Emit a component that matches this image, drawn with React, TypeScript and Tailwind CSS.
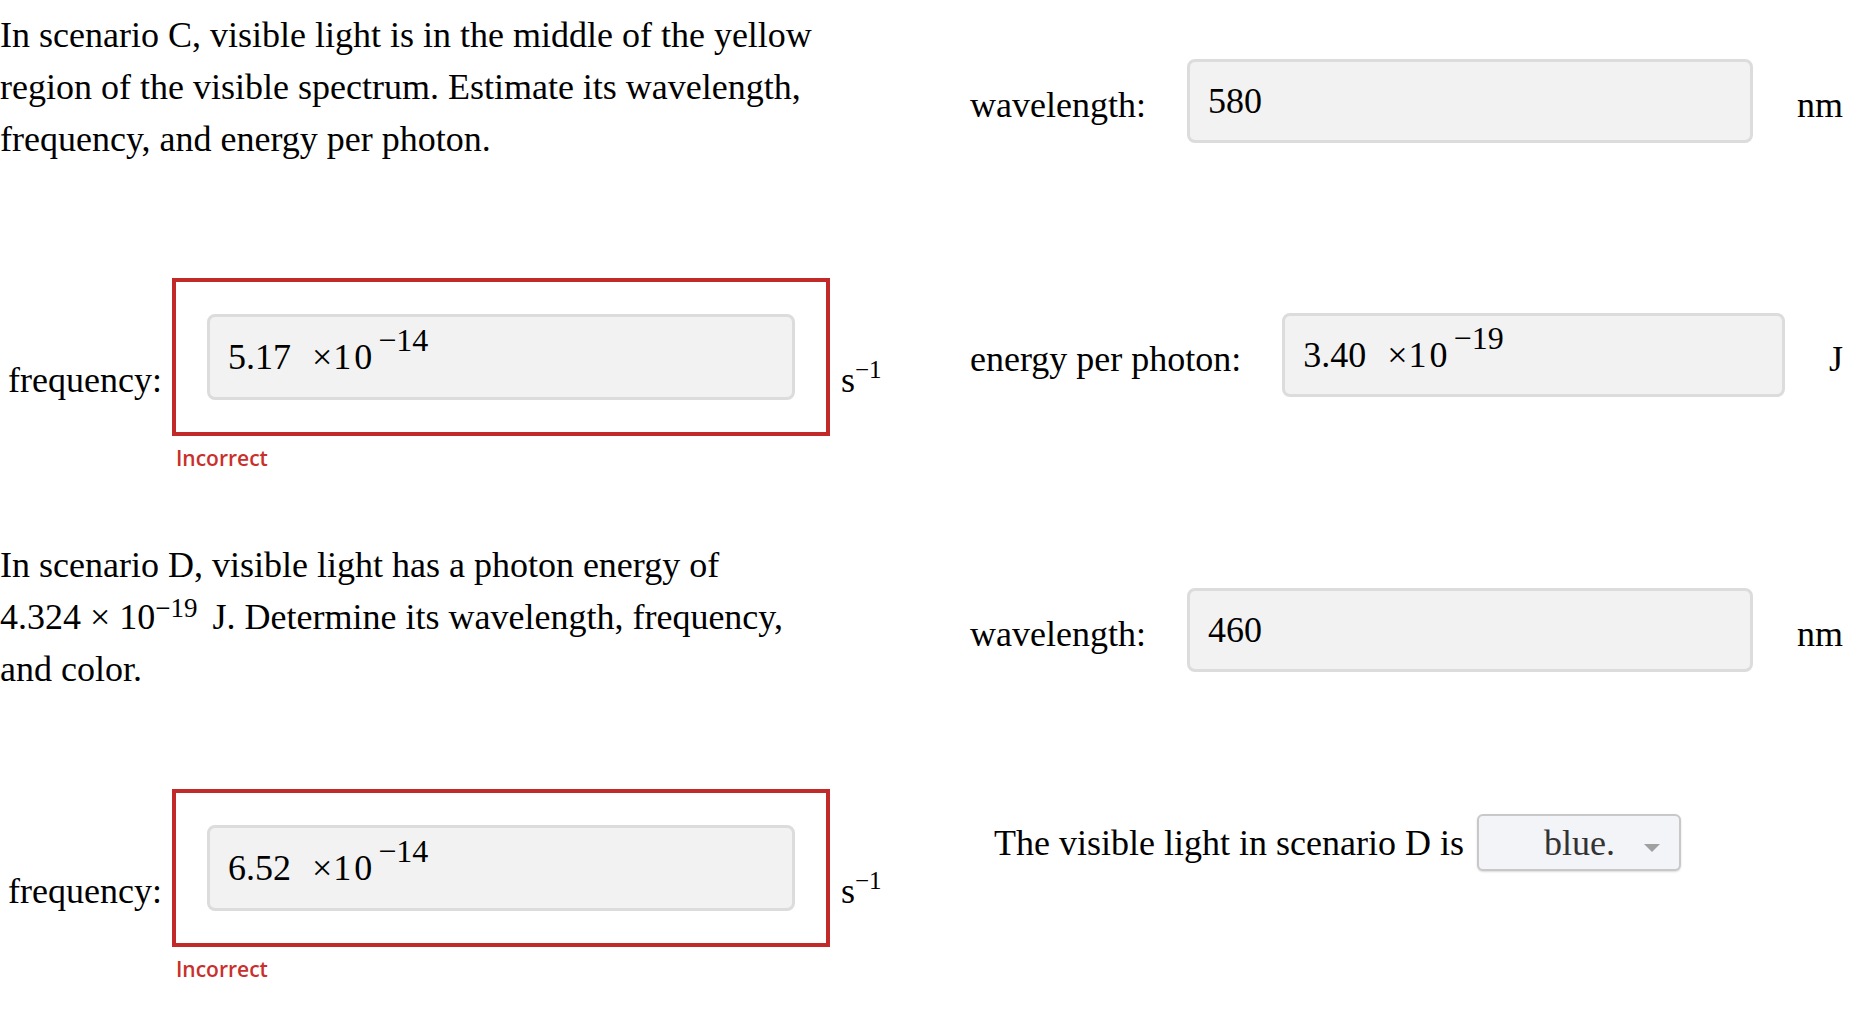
import React from 'react'

const INPUT = 'flex items-center rounded-[8px] border-[3px] border-[#dcdcdc] bg-[#f2f2f2] pl-[18px] text-black'

function Sci({ base, exp }: { base: string; exp: string }) {
  return (
    <span className="whitespace-nowrap">
      {base}
      <span className="ml-[21px]">×</span>
      <span className="ml-[1px] tracking-[3px]">10</span>
      <sup className="ml-[3px] text-[32px] top-[-18px]">−{exp}</sup>
    </span>
  )
}

function FrequencyField({ base, exp, className = '' }: { base: string; exp: string; className?: string }) {
  return (
    <div className={`flex items-start ${className}`}>
      <span className="pl-[8px] mt-[76px] whitespace-nowrap">frequency:</span>
      <div className="ml-[10px] flex flex-col">
        <div className="w-[658px] border-4 border-[#c22a2a] px-[31px] py-[32px]">
          <div className={`${INPUT} h-[86px]`}>
            <Sci base={base} exp={exp} />
          </div>
        </div>
        <span className="mt-[8px] pl-[4px] font-['Open_Sans',sans-serif] text-[21px] leading-[28px] font-semibold text-[#c9302c]">
          Incorrect
        </span>
      </div>
      <span className="ml-[11px] mt-[76px] whitespace-nowrap">
        s<sup className="text-[25px] top-[-14px]">−1</sup>
      </span>
    </div>
  )
}

function UnitField({ label, unit, children, className = '' }: { label: string; unit: string; children: React.ReactNode; className?: string }) {
  return (
    <div className={`flex items-start ${className}`}>
      <span className="mt-[20px] whitespace-nowrap">{label}</span>
      <div className={`${INPUT} ml-[41px] h-[84px] flex-1`}>{children}</div>
      <span className="ml-[44px] mt-[20px]">{unit}</span>
    </div>
  )
}

export default function App() {
  return (
    <div className="min-h-screen w-[1866px] bg-white font-['Liberation_Serif','Times_New_Roman',serif] text-[36px] leading-[52px] text-black">
      {/* Scenario C */}
      <div className="grid grid-cols-[860px_1fr] gap-x-[110px] pr-[23px]">
        <div className="flex flex-col">
          <p className="mt-[9px] w-[830px]">
            In scenario C, visible light is in the middle of the yellow region of the visible spectrum. Estimate its wavelength, frequency, and energy per photon.
          </p>
          <FrequencyField base="5.17" exp="14" className="mt-[113px]" />
        </div>
        <div className="flex flex-col">
          <UnitField label="wavelength:" unit="nm" className="mt-[59px]">580</UnitField>
          <UnitField label="energy per photon:" unit="J" className="mt-[170px]">
            <Sci base="3.40" exp="19" />
          </UnitField>
        </div>
      </div>

      {/* Scenario D */}
      <div className="mt-[67px] grid grid-cols-[860px_1fr] gap-x-[110px] pr-[23px]">
        <div className="flex flex-col">
          <p className="w-[830px]">
            In scenario D, visible light has a photon energy of{' '}
            <span className="whitespace-nowrap">
              4.324 × 10<sup className="mr-[6px] text-[27px] top-[-12px]">−19</sup>
            </span>{' '}
            J. Determine its wavelength, frequency, and color.
          </p>
          <FrequencyField base="6.52" exp="14" className="mt-[94px]" />
        </div>
        <div className="flex flex-col">
          <UnitField label="wavelength:" unit="nm" className="mt-[49px]">460</UnitField>
          <div className="mt-[142px] ml-[24px] flex items-center">
            <span className="whitespace-nowrap">The visible light in scenario D is</span>
            <div className="ml-[13px] flex h-[57px] w-[204px] items-center rounded-[6px] border-2 border-[#c8c8c8] bg-[#f3f4f8] pl-[65px] pr-[19px] text-[#333] shadow-[0_1px_2px_rgba(0,0,0,0.15)]">
              <span>blue.</span>
              <svg className="ml-auto mt-[10px]" width="16" height="8" viewBox="0 0 16 8">
                <polygon points="0,0 16,0 8,8" fill="#a0a0a0" />
              </svg>
            </div>
          </div>
        </div>
      </div>
    </div>
  )
}
